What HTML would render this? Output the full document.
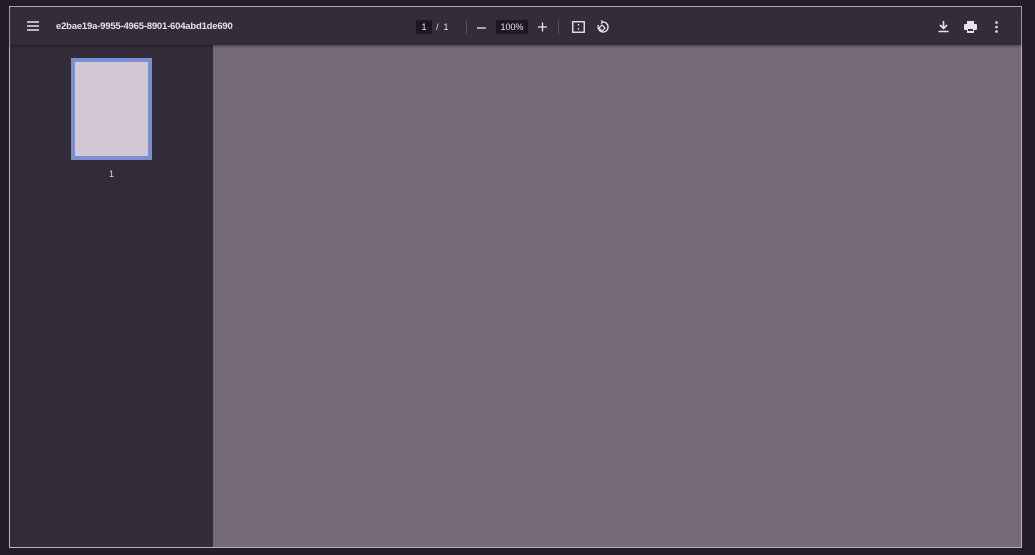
<!DOCTYPE html>
<html><head><style>
*{margin:0;padding:0;box-sizing:border-box}
body{width:1035px;height:555px;background:#251c29;position:relative;overflow:hidden;font-family:"Liberation Sans",sans-serif}
.frame{position:absolute;left:9px;top:6px;width:1013px;height:542px;border:1px solid #b9b1bd;background:#756b77}
.tb{position:absolute;left:0;top:0;width:1011px;height:38px;background:#332d3b;box-shadow:0 1px 3px rgba(0,0,0,.4);color:#e8e3ea;font-size:10px}
.side{position:absolute;left:0;top:38px;width:203px;height:502px;background:#322c3a}
.t{position:absolute}
svg{position:absolute}
</style></head><body>
<div class="frame">
<div class="side">
<div style="position:absolute;left:61px;top:13px;width:81px;height:102px;background:#7a8ed2;padding:4px"><div style="width:100%;height:100%;background:#d2c7d3"></div></div>
<div class="t" style="left:99px;top:124px;color:#e3d6e3;font-size:9px">1</div>
</div>
<div class="tb">
<svg style="left:17px;top:14px" width="12" height="10"><path d="M0 1h12M0 5h12M0 9h12" stroke="#e8e3ea" stroke-width="1.5"/></svg>
<div class="t" style="left:46px;top:14px;font-weight:bold;font-size:9.5px;letter-spacing:-0.2px">e2bae19a-9955-4965-8901-604abd1de690</div>
<div class="t" style="left:406px;top:13px;width:16px;height:14px;background:#1c1720;text-align:center;line-height:14px;font-size:9px">1</div>
<div class="t" style="left:426px;top:15px;font-size:9px">/&nbsp;&nbsp;1</div>
<div class="t" style="left:456px;top:13px;width:1px;height:14px;background:#55505c"></div>
<svg style="left:467px;top:20px" width="10" height="2"><path d="M0 1h9" stroke="#e8e3ea" stroke-width="1.3"/></svg>
<div class="t" style="left:486px;top:13px;width:32px;height:14px;background:#1c1720;text-align:center;line-height:14px;font-size:9px">100%</div>
<svg style="left:528px;top:15px" width="10" height="10"><path d="M0 5h9M4.5 0.5v9" stroke="#e8e3ea" stroke-width="1.3"/></svg>
<div class="t" style="left:548px;top:13px;width:1px;height:14px;background:#55505c"></div>
<svg style="left:562px;top:14px" width="13" height="12"><rect x="0.75" y="0.75" width="11.5" height="10.5" fill="none" stroke="#e8e3ea" stroke-width="1.4"/><path d="M6.5 3v1.5M6.5 7v1.5" stroke="#e8e3ea" stroke-width="1.4"/></svg>
<svg style="left:586px;top:13px" width="14" height="14"><path d="M7 2a5 5 0 1 1-4.5 3" fill="none" stroke="#e8e3ea" stroke-width="1.3"/><path d="M3 8l3-3 3 3-3 3z" fill="none" stroke="#e8e3ea" stroke-width="1.2"/><path d="M5 0.5l2 1.5-2 1.5" fill="none" stroke="#e8e3ea" stroke-width="1.2"/></svg>
<svg style="left:928px;top:14px" width="11" height="12"><path d="M5.5 0v7M2 4l3.5 3.5L9 4M0.5 10.5h10" fill="none" stroke="#e8e3ea" stroke-width="1.6"/></svg>
<svg style="left:954px;top:14px" width="13" height="12"><rect x="3" y="0" width="7" height="3" fill="#e8e3ea"/><rect x="0" y="3" width="13" height="6" rx="1" fill="#e8e3ea"/><rect x="3" y="7" width="7" height="5" fill="#e8e3ea"/><rect x="4" y="8" width="5" height="2" fill="#332d3b"/></svg>
<svg style="left:985px;top:14px" width="3" height="12"><circle cx="1.5" cy="1.5" r="1.3" fill="#e8e3ea"/><circle cx="1.5" cy="6" r="1.3" fill="#e8e3ea"/><circle cx="1.5" cy="10.5" r="1.3" fill="#e8e3ea"/></svg>
</div>
</div>
</body></html>
